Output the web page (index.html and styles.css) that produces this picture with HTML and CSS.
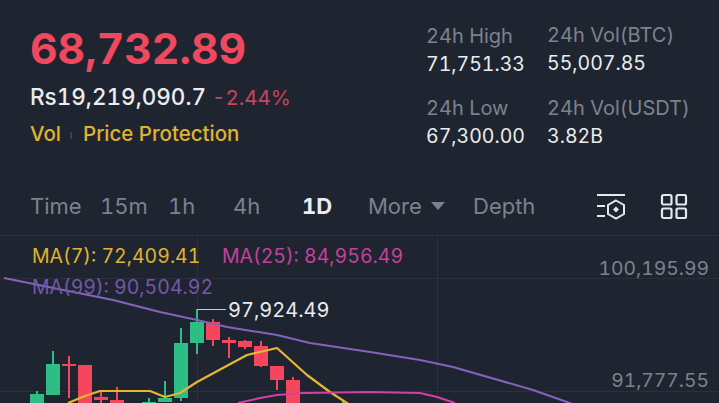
FILE: index.html
```html
<!DOCTYPE html>
<html lang="en">

<head>
    <meta charset="UTF-8">
    <meta name="viewport" content="width=device-width, initial-scale=1.0">
    <title>BTC/USDT</title>
    <link rel="stylesheet" href="styles.css">
</head>

<body>
    <div class="ticker">
        <div class="ticker-left">
            <div class="last-price">68,732.89</div>
            <div class="fiat-row">
                <span class="fiat">Rs19,219,090.7</span>
                <span class="change">-2.44%</span>
            </div>
            <div class="tags">
                <span>Vol</span>
                <i class="tag-sep"></i>
                <span>Price Protection</span>
            </div>
        </div>
        <div class="stats">
            <div class="stat">
                <div class="stat-label">24h High</div>
                <div class="stat-value">71,751.33</div>
            </div>
            <div class="stat stat-raised">
                <div class="stat-label">24h Vol(BTC)</div>
                <div class="stat-value">55,007.85</div>
            </div>
            <div class="stat">
                <div class="stat-label">24h Low</div>
                <div class="stat-value">67,300.00</div>
            </div>
            <div class="stat">
                <div class="stat-label">24h Vol(USDT)</div>
                <div class="stat-value">3.82B</div>
            </div>
        </div>
    </div>

    <div class="tabs">
        <span class="tab">Time</span>
        <span class="tab">15m</span>
        <span class="tab">1h</span>
        <span class="tab">4h</span>
        <span class="tab active">1D</span>
        <span class="tab">More<i class="caret"></i></span>
        <span class="tab">Depth</span>
        <span class="tab-icons">
            <svg width="30" height="27" viewBox="0 0 30 27" fill="none" stroke="#e4e7ec" stroke-width="2">
                <path d="M1 2h28M1 13h8M1 23h8" />
                <path d="M20 7.5l8 4.5v9l-8 4.5l-8-4.5v-9z" />
                <path d="M20 13.5l3 3l-3 3l-3-3z" fill="#e4e7ec" stroke="none" />
            </svg>
            <svg width="28" height="27" viewBox="0 0 28 27" fill="none" stroke="#e4e7ec" stroke-width="2.2">
                <rect x="2" y="2" width="9.5" height="9.5" rx="1.5" />
                <rect x="16.5" y="2" width="9.5" height="9.5" rx="1.5" />
                <rect x="2" y="15.5" width="9.5" height="9.5" rx="1.5" />
                <rect x="16.5" y="15.5" width="9.5" height="9.5" rx="1.5" />
            </svg>
        </span>
    </div>

    <div class="chart">
        <svg class="chart-svg" width="719" height="168" viewBox="0 235 719 168" fill="none">
            <path d="M0 278.5h719M0 391.5h719M197.5 235v168M437.5 235v168" stroke="#2b313c" stroke-width="1" />

            <!-- rising candles -->
            <g fill="#2ebd85">
                <rect x="30" y="394" width="14" height="9" />
                <rect x="36" y="391" width="2" height="4" />
                <rect x="46" y="364" width="14" height="31" />
                <rect x="52" y="351" width="2" height="13" />
                <rect x="142" y="402" width="14" height="1" />
                <rect x="148" y="398" width="2" height="5" />
                <rect x="158" y="398" width="14" height="4" />
                <rect x="164" y="381" width="2" height="18" />
                <rect x="174" y="343" width="14" height="55" />
                <rect x="180" y="328" width="2" height="73" />
                <rect x="190" y="322" width="14" height="21" />
                <rect x="196" y="309" width="2" height="45" />
                <rect x="342" y="400" width="2" height="3" />
            </g>

            <!-- falling candles -->
            <g fill="#f6465d">
                <rect x="68" y="356" width="2" height="42" />
                <rect x="62" y="364" width="14" height="2" />
                <rect x="78" y="365" width="14" height="38" />
                <rect x="100" y="392" width="2" height="11" />
                <rect x="94" y="397" width="14" height="3" />
                <rect x="116" y="387" width="2" height="16" />
                <rect x="110" y="400" width="14" height="3" />
                <rect x="212" y="319" width="2" height="27" />
                <rect x="206" y="322" width="14" height="18" />
                <rect x="228" y="337" width="2" height="21" />
                <rect x="222" y="340" width="14" height="3" />
                <rect x="244" y="340" width="2" height="9" />
                <rect x="238" y="341" width="14" height="6" />
                <rect x="260" y="341" width="2" height="26" />
                <rect x="254" y="346" width="14" height="20" />
                <rect x="270" y="366" width="14" height="14" />
                <rect x="276" y="380" width="2" height="10" />
                <rect x="292" y="377" width="2" height="4" />
                <rect x="286" y="380" width="14" height="23" />
            </g>

            <path d="M4 278L113 300L160 312L197 320L227 327L277 335L310 343L370 352L420 360L453 367L533 390L567 402L575 405"
                stroke="#8363bb" stroke-width="2" stroke-linejoin="round" />
            <path d="M68 403L85 396L100 391L150 391L165 397L180 393L197 382L247 355L277 348L307 375L330 392L350 405"
                stroke="#e8b730" stroke-width="2.2" stroke-linejoin="round" />
            <path d="M238 403L260 398L277 395L303 393L370 392L420 393L437 397L455 403" stroke="#d43fa5" stroke-width="2"
                stroke-linejoin="round" />
            <path d="M197.5 309.5H226" stroke="#c9ccd2" stroke-width="1" />
        </svg>

        <div class="legend">
            <div class="legend-row">
                <span class="ma7">MA(7): 72,409.41</span>
                <span class="ma25">MA(25): 84,956.49</span>
            </div>
            <div class="legend-row">
                <span class="ma99">MA(99): 90,504.92</span>
            </div>
        </div>

        <span class="high-mark">97,924.49</span>
        <span class="axis-price axis-top">100,195.99</span>
        <span class="axis-price axis-low">91,777.55</span>
    </div>
</body>

</html>
```

FILE: styles.css
```css
* {
    margin: 0;
    padding: 0;
    box-sizing: border-box;
}

body {
    font-family: 'Inter', sans-serif;
    font-variant-numeric: tabular-nums;
    width: 719px;
    height: 403px;
    background-color: #1f2530;
    color: #eaecef;
    overflow: hidden;
}

.ticker {
    display: flex;
    height: 180px;
    padding: 22px 0 0 30px;
}

.ticker-left {
    width: 396px;
}

.last-price {
    font-size: 42.7px;
    line-height: 54px;
    font-weight: 700;
    color: #f0485f;
}

.fiat-row {
    margin-top: 7px;
    font-size: 22.5px;
    line-height: 28px;
}

.fiat {
    font-weight: 500;
}

.change {
    font-size: 20.5px;
    color: #c9445c;
}

.tags {
    display: flex;
    align-items: center;
    margin-top: 8px;
    font-size: 20.5px;
    line-height: 28px;
    font-weight: 500;
    color: #e0b32f;
}

.tag-sep {
    width: 2px;
    height: 7px;
    margin: 2px 11px 0 9px;
    background-color: #3a404b;
}

.stats {
    display: grid;
    grid-template-columns: 121px auto;
    grid-auto-rows: 72px;
}

.stat-raised {
    margin-top: -1px;
}

.stat-label {
    font-size: 20px;
    line-height: 28px;
    color: #7c828d;
}

.stat-value {
    font-size: 19.5px;
    line-height: 28px;
    color: #eaecef;
}

.tabs {
    display: grid;
    grid-template-columns: 70px 68px 65px 69px 66px 105px 1fr auto;
    align-items: center;
    height: 56px;
    padding: 0 31px 3px 30px;
    border-bottom: 1px solid #2b313c;
    font-size: 22px;
    color: #7c828d;
}

.tab.active {
    font-weight: 700;
    color: #eaecef;
}

.caret {
    display: inline-block;
    margin-left: 9px;
    border-left: 7px solid transparent;
    border-right: 7px solid transparent;
    border-top: 8px solid #7c828d;
    vertical-align: 4px;
}

.tab-icons {
    display: flex;
    align-items: center;
    gap: 34px;
}

.chart {
    position: relative;
    height: 167px;
    overflow: hidden;
}

.chart-svg {
    position: absolute;
    top: -1px;
    left: 0;
}

.legend {
    position: relative;
    padding: 5px 0 0 32px;
    font-size: 19.5px;
}

.legend-row {
    display: flex;
    height: 31px;
    line-height: 31px;
}

.ma7 {
    width: 190px;
    color: #e0b32f;
}

.ma25 {
    color: #c73f9b;
}

.ma99 {
    color: #7358a8;
}

.high-mark {
    position: absolute;
    top: 60px;
    left: 228px;
    font-size: 20px;
    line-height: 28px;
    color: #eaecef;
}

.axis-price {
    position: absolute;
    right: 10px;
    font-size: 19.3px;
    line-height: 26px;
    color: #7c828d;
}

.axis-top {
    top: 19px;
}

.axis-low {
    top: 131px;
}
```
